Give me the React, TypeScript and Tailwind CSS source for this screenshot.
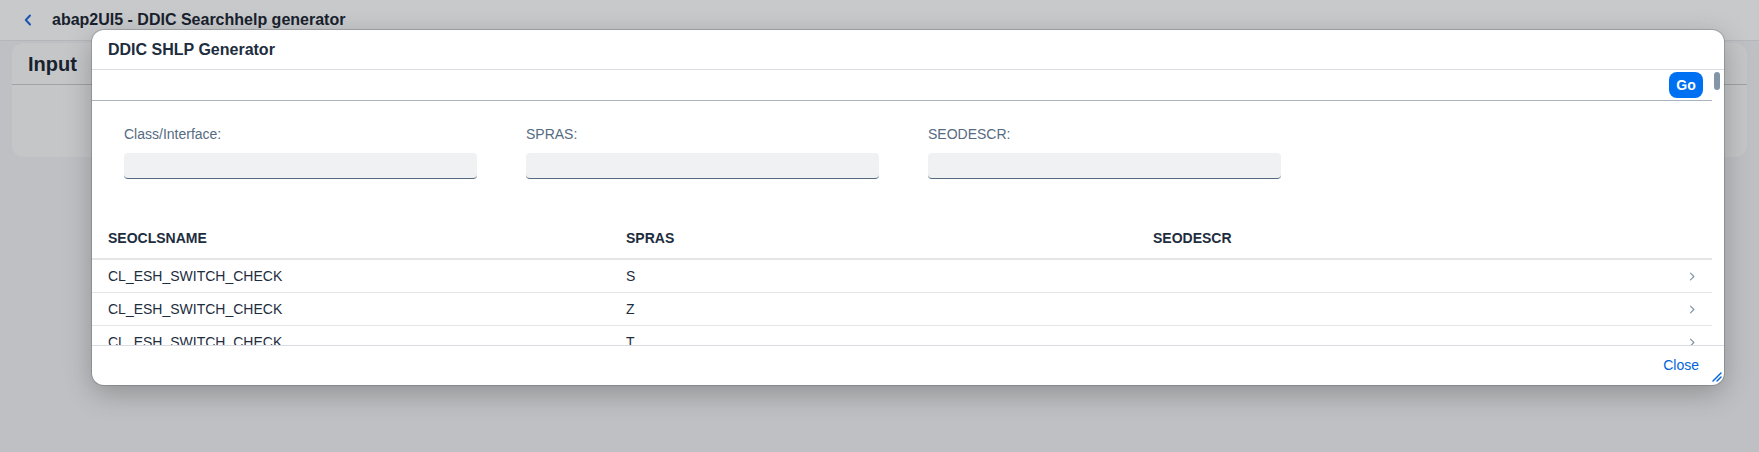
import React from 'react';

const rows = [
  { name: 'CL_ESH_SWITCH_CHECK', spras: 'S', descr: '' },
  { name: 'CL_ESH_SWITCH_CHECK', spras: 'Z', descr: '' },
  { name: 'CL_ESH_SWITCH_CHECK', spras: 'T', descr: '' },
];

const fields = ['Class/Interface:', 'SPRAS:', 'SEODESCR:'];

const Chevron = ({ className }: { className: string }) => (
  <svg viewBox="0 0 8 12" className={className} fill="none" stroke="currentColor" strokeWidth="1.6" strokeLinecap="round" strokeLinejoin="round">
    <path d="M2 1.5 6.5 6 2 10.5" />
  </svg>
);

const ChevronLeft = ({ className }: { className: string }) => (
  <svg viewBox="0 0 8 12" className={className} fill="none" stroke="currentColor" strokeWidth="2" strokeLinecap="round" strokeLinejoin="round">
    <path d="M6 1.5 1.8 6 6 10.5" />
  </svg>
);

export default function App() {
  return (
    <div className="relative w-[1759px] h-[452px] overflow-hidden bg-[#bec0c3] font-['Liberation_Sans',Arial,sans-serif]">
      {/* page behind the block layer */}
      <div className="h-[41px] flex items-center bg-[#c8c9cb] border-b border-[#b4b7ba]">
        <ChevronLeft className="ml-[24px] w-[8px] h-[12px] text-[#1b55b0]" />
        <div className="ml-[20px] text-[16px] font-bold text-[#18222e]">abap2UI5 - DDIC Searchhelp generator</div>
      </div>
      <div className="px-[12px] pt-[2px]">
        <div className="h-[114px] rounded-xl bg-[#c5c6c8]">
          <div className="h-[42px] px-4 flex items-center border-b border-[#9ea3a8]">
            <span className="text-[20px] font-bold text-[#18222e]">Input</span>
          </div>
        </div>
      </div>

      {/* dialog */}
      <div className="absolute left-[92px] top-[30px] w-[1632px] h-[355px] flex flex-col bg-white rounded-xl overflow-hidden shadow-[0_0_0_1px_rgba(60,70,80,0.25),0_8px_28px_rgba(0,0,0,0.25)]">
        <div className="h-[40px] shrink-0 px-4 flex items-center border-b border-[#d9dde1]">
          <span className="text-[16px] font-bold text-[#1d2d3e]">DDIC SHLP Generator</span>
        </div>

        <div className="flex-1 min-h-0 flex">
          <div className="flex-1 min-w-0 flex flex-col overflow-hidden">
            <div className="h-[31px] shrink-0 flex items-center justify-end pr-[9px] border-b border-[#a9b4be]">
              <button className="h-[26px] w-[34px] rounded-lg bg-[#0070f2] text-white text-[14px] font-bold">Go</button>
            </div>

            <div className="shrink-0 pl-[32px] pt-[24px] flex gap-[49px]">
              {fields.map((f) => (
                <div key={f} className="w-[353px] flex flex-col">
                  <span className="h-[18px] leading-[18px] text-[14px] text-[#556b82]">{f}</span>
                  <div className="mt-[10px] h-[26px] rounded-[4px] bg-[#eff1f2] border-b border-[#556b82]" />
                </div>
              ))}
            </div>

            <div className="mt-[39px] shrink-0">
              <div className="h-[42px] flex items-center border-b-2 border-[#e5e5e5] text-[14px] font-bold text-[#1d2d3e]">
                <div className="w-[518px] pl-4">SEOCLSNAME</div>
                <div className="w-[527px] pl-4">SPRAS</div>
                <div className="flex-1 pl-4">SEODESCR</div>
                <div className="w-[40px]" />
              </div>
              {rows.map((r, i) => (
                <div key={i} className="h-[33px] flex items-center border-b border-[#e5e5e5] text-[14px] text-[#1d2d3e]">
                  <div className="w-[518px] pl-4">{r.name}</div>
                  <div className="w-[527px] pl-4">{r.spras}</div>
                  <div className="flex-1 pl-4">{r.descr}</div>
                  <div className="w-[40px] flex justify-center">
                    <Chevron className="w-[6px] h-[9px] text-[#8396a8]" />
                  </div>
                </div>
              ))}
            </div>
          </div>
          <div className="w-[12px] shrink-0 pt-[2px] pl-[2px]">
            <div className="w-[6px] h-[18px] rounded-full bg-[#8396a8]" />
          </div>
        </div>

        <div className="h-[40px] shrink-0 flex items-center justify-end pr-[17px] border-t border-[#d9dde1]">
          <button className="px-2 text-[14px] text-[#0064d9]">Close</button>
        </div>

        <svg viewBox="0 0 12 12" className="absolute right-[2px] bottom-[3px] w-[12px] h-[12px]" stroke="#0064d9" strokeWidth="1.4" strokeLinecap="round">
          <path d="M11 3 3 11" />
          <path d="M11 7 7 11" />
        </svg>
      </div>
    </div>
  );
}
